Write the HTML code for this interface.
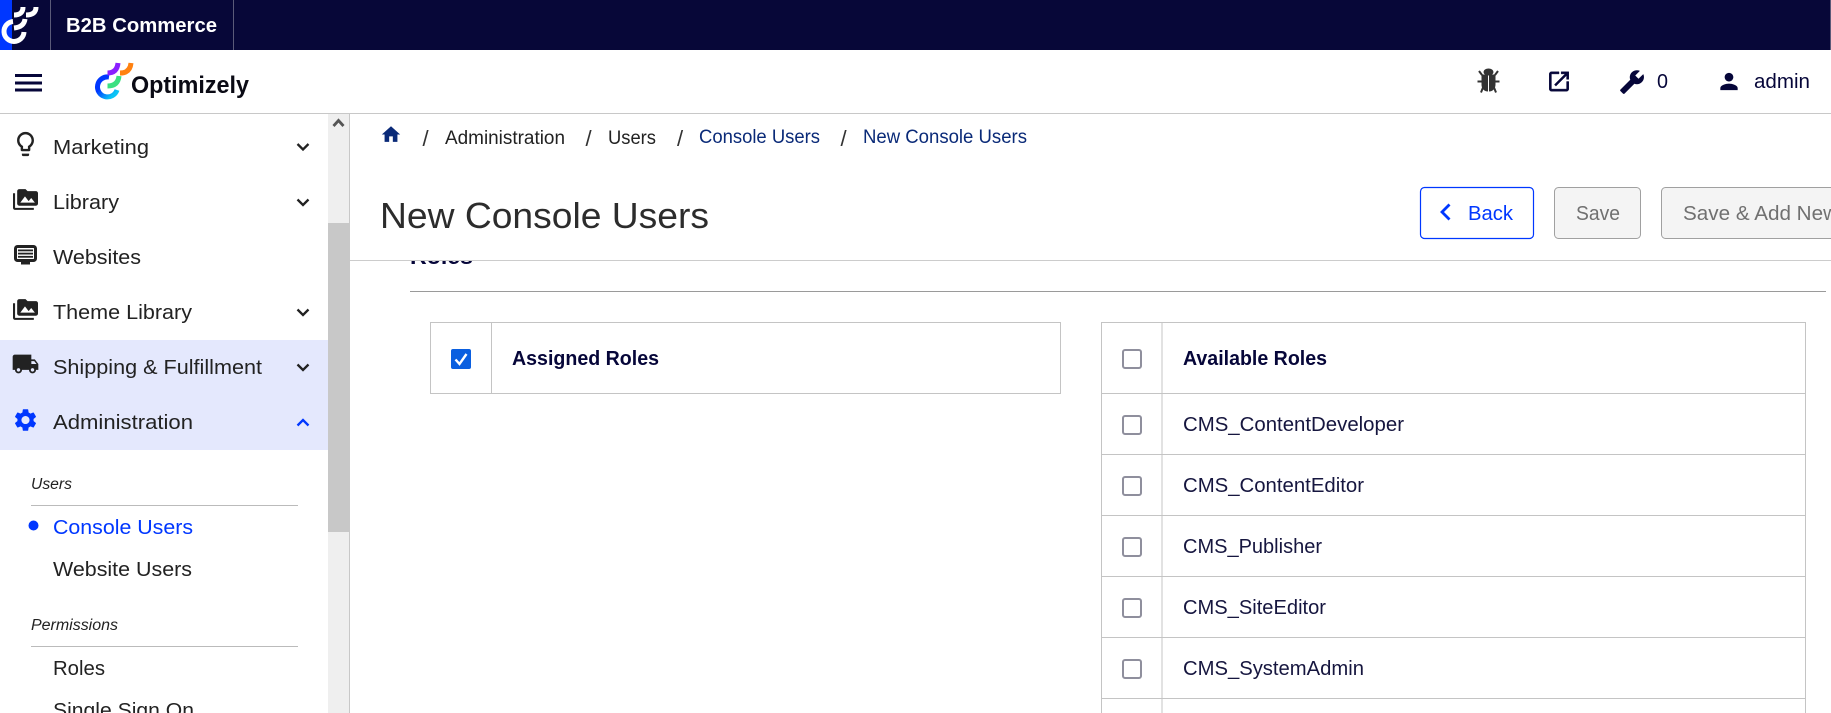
<!DOCTYPE html>
<html lang="en"><head><meta charset="utf-8"><title>New Console Users</title>
<style>
html,body{margin:0;padding:0;width:1831px;height:713px;overflow:hidden;background:#fff}
svg{display:block}
text{font-family:"Liberation Sans",sans-serif;fill:#222}
.n{font-size:20.5px;letter-spacing:0}
.nav{fill:#0a2a78}
.r{font-size:20.5px;fill:#16163f}
.b{font-size:20.5px;font-weight:bold;fill:#060639}
.i{font-size:15.5px;font-style:italic}
.s{font-size:22px;fill:#333}
</style></head><body>
<svg width="1831" height="713" viewBox="0 0 1831 713" xmlns="http://www.w3.org/2000/svg">
<defs><linearGradient id="g" x1="0" y1="0" x2="1" y2="1"><stop offset="0.35" stop-color="#0037ff"/><stop offset="0.85" stop-color="#0bc5f5"/></linearGradient></defs>
<rect width="1831" height="713" fill="#fff"/>

<!-- main content under header -->
<text x="410" y="264" textLength="63" lengthAdjust="spacingAndGlyphs" style="font-size:22px;font-weight:bold;fill:#060639">Roles</text>
<rect x="350" y="114" width="1481" height="146" fill="#fff"/>
<rect x="350" y="260" width="1481" height="1" fill="#ccc"/>
<rect x="410" y="291" width="1416" height="1" fill="#9a9a9a"/>

<!-- top bar -->
<rect width="1831" height="50" fill="#070738"/>
<rect width="12" height="50" fill="#0037ff"/>
<rect x="50" width="1" height="50" fill="#5a5a78"/>
<rect x="233" width="1" height="50" fill="#5a5a78"/>
<rect x="1830" width="1" height="50" fill="#5a5a78"/>
<g fill="none" stroke="#fff" stroke-width="5">
<path d="M13 21.500 A10 10 0 1 0 24 32"/>
<path d="M14 28 Q24 27 25 19"/>
<path d="M14 15 Q23 15 23 7"/>
<path d="M26 15 Q36 15 36 7"/>
</g>
<text x="66" y="32" textLength="151" lengthAdjust="spacingAndGlyphs" style="font-size:20px;font-weight:bold;fill:#fff">B2B Commerce</text>

<!-- header -->
<rect y="113" width="1831" height="1" fill="#c8c8c8"/>
<rect x="15" y="74" width="27" height="3" fill="#060639"/>
<rect x="15" y="81.500" width="27" height="3" fill="#060639"/>
<rect x="15" y="88.500" width="27" height="3" fill="#060639"/>
<g fill="none" stroke-width="5">
<path d="M109 77 A10 10 0 1 0 117 90" stroke="url(#g)"/>
<path d="M107.500 86 Q118 86 119 76" stroke="#3be081"/>
<path d="M107.500 73 Q117 73 118 63" stroke="#8a1fff"/>
<path d="M120 73 Q130 73 131 63" stroke="#ff8110"/>
</g>
<text x="131" y="93" textLength="118" lengthAdjust="spacingAndGlyphs" style="font-size:24px;font-weight:bold;fill:#0a0a14">Optimizely</text>

<!-- header right icons -->
<g fill="#333">
<ellipse cx="1488.500" cy="72" rx="5" ry="3.500"/>
<path d="M1481.500 74.500 h6.500 v17 c-3.800 0 -6.500 -3 -6.500 -7z M1489 74.500 h6.500 v10 c0 4 -2.700 7 -6.500 7z"/>
<g stroke="#333" stroke-width="2" fill="none"><path d="M1479 71 l3 4 M1498 71 l-3 4 M1477.500 81.500 h5 M1499.500 81.500 h-5 M1481 92.500 l2 -5 M1496 92.500 l-2 -5"/></g>
</g>
<svg x="1546" y="68.500" width="26" height="26" viewBox="0 0 24 24"><path fill="#060639" stroke="#060639" stroke-width=".4" d="M19 19H5V5h7V3H5c-1.110 0-2 .9-2 2v14c0 1.100.89 2 2 2h14c1.100 0 2-.9 2-2v-7h-2v7zM14 3v2h3.590l-9.830 9.830 1.410 1.410L19 6.410V10h2V3h-7z"/></svg>
<svg x="1619" y="69" width="26" height="26" viewBox="0 0 24 24"><path fill="#060639" transform="translate(24 0) scale(-1 1)" d="M22.700 19l-9.100-9.100c.9-2.300.4-5-1.500-6.900-2-2-5-2.400-7.400-1.300L9 6 6 9 1.600 4.700C.4 7.100.9 10.100 2.900 12.100c1.900 1.900 4.600 2.400 6.900 1.500l9.100 9.100c.4.4 1 .4 1.400 0l2.300-2.300c.5-.4.5-1.100.1-1.400z"/></svg>
<text x="1657" y="88" textLength="11" lengthAdjust="spacingAndGlyphs" style="font-size:20.5px;fill:#060639">0</text>
<svg x="1716" y="68.500" width="26" height="26" viewBox="0 0 24 24"><path fill="#060639" d="M12 12c2.210 0 4-1.790 4-4s-1.790-4-4-4-4 1.790-4 4 1.790 4 4 4zm0 2c-2.670 0-8 1.340-8 4v2h16v-2c0-2.660-5.330-4-8-4z"/></svg>
<text x="1754" y="88" textLength="56" lengthAdjust="spacingAndGlyphs" style="font-size:20.5px;fill:#060639">admin</text>

<!-- sidebar -->
<rect x="0" y="340" width="328" height="110" fill="#e4e8fd"/>
<rect x="328" y="114" width="21" height="599" fill="#efefef"/>
<rect x="328" y="223" width="21" height="309" fill="#c8c8c8"/>
<rect x="349" y="114" width="1" height="599" fill="#c8c8c8"/>
<path d="M333.500 126 L338.500 120.500 L343.500 126" fill="none" stroke="#555" stroke-width="2.800"/>

<svg x="11" y="129.500" width="29" height="29" viewBox="0 0 24 24"><path fill="#222" d="M9 21c0 .55.45 1 1 1h4c.55 0 1-.45 1-1v-1H9v1zm3-19C8.140 2 5 5.140 5 9c0 2.380 1.190 4.470 3 5.740V17c0 .55.45 1 1 1h6c.55 0 1-.45 1-1v-2.260c1.810-1.270 3-3.360 3-5.740 0-3.860-3.140-7-7-7zm2.850 11.100l-.85.6V16h-4v-2.300l-.85-.6C7.800 12.160 7 10.630 7 9c0-2.760 2.240-5 5-5s5 2.240 5 5c0 1.630-.8 3.160-2.150 4.100z"/></svg>
<svg x="13" y="187" width="25" height="25" viewBox="0 0 24 24"><path fill="#222" d="M2 6H0v5h.01L0 20c0 1.100.9 2 2 2h18v-2H2V6zm20-2h-8l-2-2H6c-1.100 0-1.990.9-1.990 2L4 16c0 1.100.9 2 2 2h16c1.100 0 2-.9 2-2V6c0-1.100-.9-2-2-2zM7 15l4.500-6 3.500 4.510 2.500-3.010L21 15H7z"/></svg>
<g>
<rect x="15.500" y="246.500" width="20" height="14" rx="2" fill="none" stroke="#222" stroke-width="3"/>
<rect x="21" y="262" width="9" height="2.500" fill="#222"/>
<rect x="18" y="249.500" width="15" height="1.800" fill="#222"/>
<rect x="18" y="252.700" width="15" height="1.800" fill="#222"/>
<rect x="18" y="255.900" width="15" height="1.800" fill="#222"/>
</g>
<svg x="13" y="297" width="25" height="25" viewBox="0 0 24 24"><path fill="#222" d="M2 6H0v5h.01L0 20c0 1.100.9 2 2 2h18v-2H2V6zm20-2h-8l-2-2H6c-1.100 0-1.990.9-1.990 2L4 16c0 1.100.9 2 2 2h16c1.100 0 2-.9 2-2V6c0-1.100-.9-2-2-2zM7 15l4.500-6 3.500 4.510 2.500-3.010L21 15H7z"/></svg>
<svg x="11.500" y="350" width="28" height="28" viewBox="0 0 24 24"><path fill="#222" d="M20 8h-3V4H3c-1.100 0-2 .9-2 2v11h2c0 1.660 1.340 3 3 3s3-1.340 3-3h6c0 1.660 1.340 3 3 3s3-1.340 3-3h2v-5l-3-4zM6 18.500c-.83 0-1.500-.67-1.500-1.500s.67-1.500 1.500-1.500 1.500.67 1.500 1.500-.67 1.500-1.500 1.500zm13.500-9l1.960 2.500H17V9.500h2.500zm-1.500 9c-.83 0-1.500-.67-1.500-1.500s.67-1.500 1.500-1.500 1.500.67 1.500 1.500-.67 1.500-1.500 1.500z"/></svg>
<svg x="12" y="406.500" width="27" height="27" viewBox="0 0 24 24"><path fill="#0037ff" d="M19.140 12.940c.04-.3.06-.61.06-.94 0-.32-.02-.64-.07-.94l2.030-1.580c.18-.14.23-.41.12-.61l-1.920-3.320c-.12-.22-.37-.29-.59-.22l-2.390.96c-.5-.38-1.030-.7-1.620-.94l-.36-2.540c-.04-.24-.24-.41-.48-.41h-3.840c-.24 0-.43.17-.47.41l-.36 2.540c-.59.24-1.130.57-1.620.94l-2.390-.96c-.22-.08-.47 0-.59.22L2.740 8.870c-.12.21-.08.47.12.61l2.030 1.580c-.05.3-.09.63-.09.94s.02.64.07.94l-2.030 1.580c-.18.14-.23.41-.12.61l1.920 3.320c.12.22.37.29.59.22l2.390-.96c.5.38 1.030.7 1.620.94l.36 2.540c.05.24.24.41.48.41h3.840c.24 0 .44-.17.47-.41l.36-2.540c.59-.24 1.130-.56 1.620-.94l2.390.96c.22.08.47 0 .59-.22l1.920-3.320c.12-.22.07-.47-.12-.61l-2.010-1.580zM12 15.600c-1.980 0-3.600-1.620-3.600-3.600s1.620-3.600 3.600-3.600 3.600 1.620 3.600 3.600-1.620 3.600-3.600 3.600z"/></svg>

<text class="n" x="53" y="154" textLength="96" lengthAdjust="spacingAndGlyphs">Marketing</text>
<text class="n" x="53" y="209" textLength="66" lengthAdjust="spacingAndGlyphs">Library</text>
<text class="n" x="53" y="264" textLength="88" lengthAdjust="spacingAndGlyphs">Websites</text>
<text class="n" x="53" y="319" textLength="139" lengthAdjust="spacingAndGlyphs">Theme Library</text>
<text class="n" x="53" y="374" textLength="209" lengthAdjust="spacingAndGlyphs">Shipping &amp; Fulfillment</text>
<text class="n" x="53" y="429" textLength="140" lengthAdjust="spacingAndGlyphs">Administration</text>
<g fill="none" stroke="#222" stroke-width="2.300">
<path d="M297.500 144 L303 149.500 L308.500 144"/>
<path d="M297.500 199.500 L303 205 L308.500 199.500"/>
<path d="M297.500 309.500 L303 315 L308.500 309.500"/>
<path d="M297.500 364.500 L303 370 L308.500 364.500"/>
<path d="M297.500 425.500 L303 420 L308.500 425.500" stroke="#0037ff"/>
</g>

<text class="i" x="31" y="489" textLength="41" lengthAdjust="spacingAndGlyphs">Users</text>
<rect x="31" y="505" width="267" height="1" fill="#bbb"/>
<circle cx="33.500" cy="525.500" r="5" fill="#0037ff"/>
<text class="n" x="53" y="534" textLength="140" lengthAdjust="spacingAndGlyphs" style="fill:#0037ff">Console Users</text>
<text class="n" x="53" y="576" textLength="139" lengthAdjust="spacingAndGlyphs">Website Users</text>
<text class="i" x="31" y="630" textLength="87" lengthAdjust="spacingAndGlyphs">Permissions</text>
<rect x="31" y="646" width="267" height="1" fill="#bbb"/>
<text class="n" x="53" y="675" textLength="52" lengthAdjust="spacingAndGlyphs">Roles</text>
<text class="n" x="53" y="717" textLength="141" lengthAdjust="spacingAndGlyphs">Single Sign On</text>

<!-- breadcrumb -->
<svg x="380" y="123.500" width="22" height="22" viewBox="0 0 24 24"><path fill="#0a2a78" d="M10 20v-6h4v6h5v-8h3L12 3 2 12h3v8z"/></svg>
<text class="s" x="422.500" y="146">/</text>
<text x="445" y="144" textLength="120" lengthAdjust="spacingAndGlyphs" style="font-size:19px">Administration</text>
<text class="s" x="585.500" y="146">/</text>
<text x="608" y="144" textLength="48" lengthAdjust="spacingAndGlyphs" style="font-size:19px">Users</text>
<text class="s" x="677" y="146">/</text>
<text class="nav" x="699" y="143" textLength="121" lengthAdjust="spacingAndGlyphs" style="font-size:19px">Console Users</text>
<text class="s" x="840.500" y="146">/</text>
<text class="nav" x="863" y="143" textLength="164" lengthAdjust="spacingAndGlyphs" style="font-size:19px">New Console Users</text>
<text x="380" y="228" textLength="329" lengthAdjust="spacingAndGlyphs" style="font-size:36px;fill:#2c2c2c">New Console Users</text>

<!-- buttons -->
<rect x="1420.500" y="187.500" width="113" height="51" rx="4" fill="#fff" stroke="#0037ff" stroke-width="1.200"/>
<path d="M1449.500 204.500 L1442 212 L1449.500 219.500" fill="none" stroke="#0037ff" stroke-width="2.800"/>
<text x="1468" y="220" textLength="45" lengthAdjust="spacingAndGlyphs" style="font-size:20.5px;fill:#0037ff">Back</text>
<rect x="1554.500" y="187.500" width="86" height="51" rx="4" fill="#f4f4f4" stroke="#a0a0a0"/>
<text x="1576" y="220" textLength="44" lengthAdjust="spacingAndGlyphs" style="font-size:20.5px;fill:#707070">Save</text>
<rect x="1661.500" y="187.500" width="200" height="51" rx="4" fill="#f4f4f4" stroke="#a0a0a0"/>
<text x="1683" y="220" textLength="155" lengthAdjust="spacingAndGlyphs" style="font-size:20.5px;fill:#707070">Save &amp; Add New</text>

<!-- Assigned -->
<rect x="430.500" y="322.500" width="630" height="71" fill="#fff" stroke="#c4c4c4"/>
<rect x="491" y="322" width="1" height="72" fill="#c4c4c4"/>
<rect x="451" y="349" width="20" height="20" rx="2" fill="#0a5fe0"/>
<path d="M455.500 359.500 L459.500 364 L466.500 354" fill="none" stroke="#fff" stroke-width="2.400"/>
<text class="b" x="512" y="365" textLength="147" lengthAdjust="spacingAndGlyphs">Assigned Roles</text>

<!-- Available -->
<path d="M1101.500 713 V322.500 H1805.500 V713 M1162 322 V713" fill="none" stroke="#c4c4c4"/>
<g fill="#c4c4c4">
<rect x="1101" y="393" width="705" height="1"/>
<rect x="1101" y="454" width="705" height="1"/>
<rect x="1101" y="515" width="705" height="1"/>
<rect x="1101" y="576" width="705" height="1"/>
<rect x="1101" y="637" width="705" height="1"/>
<rect x="1101" y="698" width="705" height="1"/>
</g>
<g fill="#fff" stroke="#8f8f9d" stroke-width="2">
<rect x="1123" y="350" width="18" height="18" rx="2"/>
<rect x="1123" y="416" width="18" height="18" rx="2"/>
<rect x="1123" y="477" width="18" height="18" rx="2"/>
<rect x="1123" y="538" width="18" height="18" rx="2"/>
<rect x="1123" y="599" width="18" height="18" rx="2"/>
<rect x="1123" y="660" width="18" height="18" rx="2"/>
</g>
<text class="b" x="1183" y="365" textLength="144" lengthAdjust="spacingAndGlyphs">Available Roles</text>
<text class="r" x="1183" y="431" textLength="221" lengthAdjust="spacingAndGlyphs">CMS_ContentDeveloper</text>
<text class="r" x="1183" y="492" textLength="181" lengthAdjust="spacingAndGlyphs">CMS_ContentEditor</text>
<text class="r" x="1183" y="553" textLength="139" lengthAdjust="spacingAndGlyphs">CMS_Publisher</text>
<text class="r" x="1183" y="614" textLength="143" lengthAdjust="spacingAndGlyphs">CMS_SiteEditor</text>
<text class="r" x="1183" y="675" textLength="181" lengthAdjust="spacingAndGlyphs">CMS_SystemAdmin</text>
</svg>
</body></html>
